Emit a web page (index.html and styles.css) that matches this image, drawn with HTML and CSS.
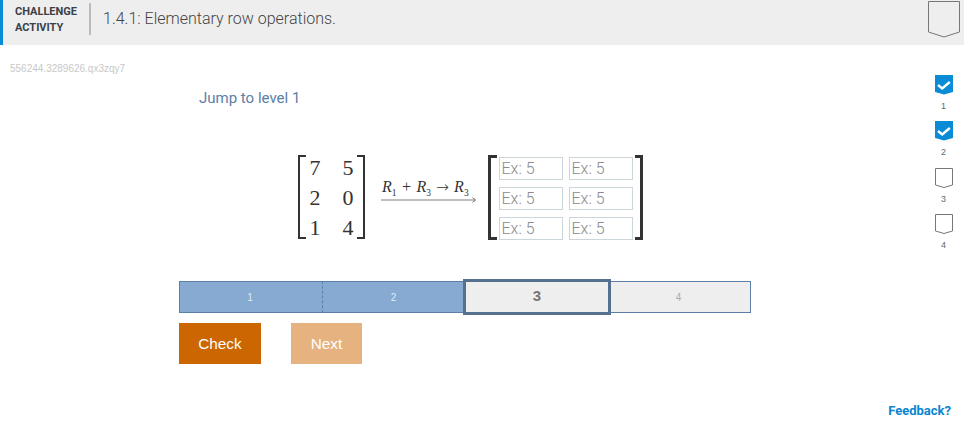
FILE: index.html
```html
<!DOCTYPE html>
<html lang="en">
<head>
<meta charset="utf-8">
<title>Challenge activity</title>
<link rel="stylesheet" href="styles.css">
</head>
<body>
<header class="top">
  <div class="kind">CHALLENGE<br>ACTIVITY</div>
  <h1 class="title">1.4.1: Elementary row operations.</h1>
  <svg class="flag" width="34" height="38" viewBox="0 0 34 38"><path d="M1.5 1.500H32.500V32L17 37L1.500 32Z" fill="none" stroke="#777" stroke-width="1"/></svg>
</header>
<div class="content">
  <main class="main">
    <div class="code">556244.3289626.qx3zqy7</div>
    <a class="jump">Jump to level 1</a>
    <div class="math">
      <div class="matrix">
        <span class="br br-l"></span>
        <div class="nums">
          <span>7</span><span>5</span><span>2</span><span>0</span><span>1</span><span>4</span>
        </div>
        <span class="br br-r"></span>
      </div>
      <div class="op">
        <div class="op-text"><i>R</i><sub>1</sub><span class="rel">+</span><i>R</i><sub>3</sub><span class="rel arrow">→</span><i>R</i><sub>3</sub></div>
        <svg class="op-arrow" width="97" height="6" viewBox="0 0 97 6"><path d="M0 3H94" stroke="#aaa" stroke-width="1.500"/><path d="M91.500 .5L94.500 3L91.500 5.500" fill="none" stroke="#444" stroke-width=".8"/></svg>
      </div>
      <div class="answer">
        <span class="abr abr-l"></span>
        <div class="inputs">
          <input class="cell" placeholder="Ex: 5"><input class="cell" placeholder="Ex: 5">
          <input class="cell" placeholder="Ex: 5"><input class="cell" placeholder="Ex: 5">
          <input class="cell" placeholder="Ex: 5"><input class="cell" placeholder="Ex: 5">
        </div>
        <span class="abr abr-r"></span>
      </div>
    </div>
    <div class="levels">
      <div class="lv done first">1</div>
      <div class="lv done second">2</div>
      <div class="lv current">3</div>
      <div class="lv todo">4</div>
    </div>
    <div class="actions">
      <button class="btn check">Check</button>
      <button class="btn next">Next</button>
    </div>
  </main>
  <aside class="rail">
    <div class="step">
      <svg class="mark" width="18" height="20" viewBox="0 0 18 20"><path d="M0 0H18V17L9 19.500L0 17Z" fill="#0a8bd6"/><path d="M3 10L7.200 13.500L14.800 7" fill="none" stroke="#fff" stroke-width="2.400"/></svg>
      <span class="num">1</span>
    </div>
    <div class="step">
      <svg class="mark" width="18" height="20" viewBox="0 0 18 20"><path d="M0 0H18V17L9 19.500L0 17Z" fill="#0a8bd6"/><path d="M3 10L7.200 13.500L14.800 7" fill="none" stroke="#fff" stroke-width="2.400"/></svg>
      <span class="num">2</span>
    </div>
    <div class="step">
      <svg class="mark" width="18" height="20" viewBox="0 0 18 20"><path d="M.5 .5H17.500V17L9 19.500L.5 17Z" fill="none" stroke="#777"/></svg>
      <span class="num">3</span>
    </div>
    <div class="step">
      <svg class="mark" width="18" height="20" viewBox="0 0 18 20"><path d="M.5 .5H17.500V17L9 19.500L.5 17Z" fill="none" stroke="#777"/></svg>
      <span class="num">4</span>
    </div>
  </aside>
</div>
<footer class="foot"><a class="feedback">Feedback?</a></footer>
</body>
</html>
```
FILE: styles.css
```css
* { box-sizing: border-box; }
html, body { margin: 0; padding: 0; }
body {
  width: 964px;
  height: 427px;
  overflow: hidden;
  background: #fff;
  font-family: Roboto, sans-serif;
  display: flex;
  flex-direction: column;
}
.top {
  height: 45px;
  flex: none;
  background: #eeeeee;
  border-left: 3px solid #0a8bd6;
  display: flex;
  align-items: flex-start;
  padding-left: 12px;
}
.kind {
  font-size: 11px;
  font-weight: 700;
  line-height: 16px;
  color: #3a4048;
  width: 76px;
  height: 32px;
  margin-top: 3px;
  padding-top: 0.500px;
  border-right: 2px solid #bbb;
}
.title {
  margin: 9px 0 0 12px;
  font-size: 16px;
  font-weight: 300;
  line-height: 20px;
  color: #444;
  flex: 1;
}
.flag { margin: 0 3px 0 0; flex: none; }
.content { flex: 1; display: flex; min-height: 0; }
.main { flex: 1; min-width: 0; }
.code {
  font-family: "Liberation Sans", sans-serif;
  font-size: 10px;
  line-height: 11px;
  color: #c8c8c8;
  margin: 18px 0 0 10px;
}
.jump {
  display: block;
  margin: 15px 0 0 199px;
  font-size: 15px;
  line-height: 18px;
  color: #5b7ea8;
}
.math {
  display: flex;
  align-items: flex-start;
  margin: 48px 0 0 298px;
  height: 85px;
}
.matrix { display: flex; height: 84px; width: 67px; }
.br {
  width: 8px;
  flex: none;
  border: solid #333;
  border-width: 2px 0;
}
.br-l { border-left-width: 2px; }
.br-r { border-right-width: 2px; }
.nums {
  flex: none;
  display: grid;
  grid-template-columns: 33px 33px;
  grid-auto-rows: 30px;
  margin: 0 -7.500px;
  width: 66px;
  font-family: "Liberation Serif", serif;
  font-size: 22px;
  line-height: 26px;
  color: #333;
  text-align: center;
}
.op {
  width: 97px;
  margin: 24px 0 0 16px;
  flex: none;
}
.op-text {
  font-family: "Liberation Serif", serif;
  font-size: 16px;
  line-height: 16px;
  height: 18px;
  white-space: nowrap;
  color: #333;
  padding-left: 1px;
}
.op-text sub { font-size: 9.500px; line-height: 0; }
.rel { margin: 0 5.500px; }
.arrow { font-family: "DejaVu Sans", sans-serif; font-size: 15.500px; margin: 0 5px; font-weight: 200; }
.op-arrow { display: block; }
.answer {
  display: flex;
  width: 155px;
  height: 85px;
  margin-left: 10px;
}
.abr {
  width: 9px;
  height: 85px;
  flex: none;
  border: solid #333;
  border-width: 3px 0;
}
.abr-l { border-left-width: 3px; }
.abr-r { border-right-width: 3px; width: 8px; }
.inputs {
  display: grid;
  grid-template-columns: 64px 64px;
  grid-auto-rows: 23px;
  column-gap: 6px;
  row-gap: 7px;
  margin: 2px 2px 0 2px;
}
.cell {
  width: 64px;
  height: 23px;
  border: 1px solid #ccd6da;
  padding: 0 1.500px;
  font-family: Roboto, sans-serif;
  font-size: 16px;
  font-weight: 300;
  background: #fff;
  outline: none;
  border-radius: 0;
}
.cell::placeholder { color: #8a8a8a; opacity: 1; }
.levels {
  display: flex;
  align-items: center;
  height: 32px;
  width: 572px;
  margin: 41px 0 0 179px;
}
.lv {
  height: 32px;
  display: flex;
  align-items: center;
  justify-content: center;
  font-family: "Liberation Sans", sans-serif;
  font-size: 10px;
  border: 1px solid #5b80a8;
}
.done { background: #86aad2; color: #dcecf6; }
.first { width: 144px; border-right: 1px dashed #5b80a8; padding-right: 2px; }
.second { width: 141px; border-left: 0; border-right: 0; }
.current {
  position: relative;
  width: 148px;
  height: 36px;
  background: #eeeeee;
  border: 3px solid #56708f;
  color: #777;
  font-size: 15px;
  font-weight: 700;
  padding-bottom: 3px;
  margin: 0 -1px 0 -1px;
}
.todo { flex: 1; background: #eeeeee; color: #aaa; border-left: 0; padding-right: 3px; }
.actions {
  display: flex;
  gap: 30px;
  margin: 10px 0 0 179px;
}
.btn {
  height: 41px;
  border: 0;
  padding: 0;
  font-family: "Liberation Sans", sans-serif;
  font-size: 15.300px;
  color: #fff;
  border-radius: 0;
}
.check { width: 82px; background: #cc6600; }
.next { width: 71px; background: #e6b280; }
.rail {
  width: 29px;
  margin-right: 6px;
  flex: none;
  padding-top: 30px;
  display: flex;
  flex-direction: column;
  align-items: center;
}
.step {
  height: 46.330px;
  display: flex;
  flex-direction: column;
  align-items: center;
}
.mark { display: block; flex: none; }
.num {
  margin-top: 6px;
  font-family: "Liberation Sans", sans-serif;
  font-size: 9px;
  line-height: 10px;
  color: #666;
}
.foot {
  flex: none;
  height: 24px;
  padding-right: 13px;
  text-align: right;
  line-height: 14px;
}
.feedback {
  font-size: 13px;
  font-weight: 700;
  line-height: 14px;
  color: #0a85d0;
}
```
